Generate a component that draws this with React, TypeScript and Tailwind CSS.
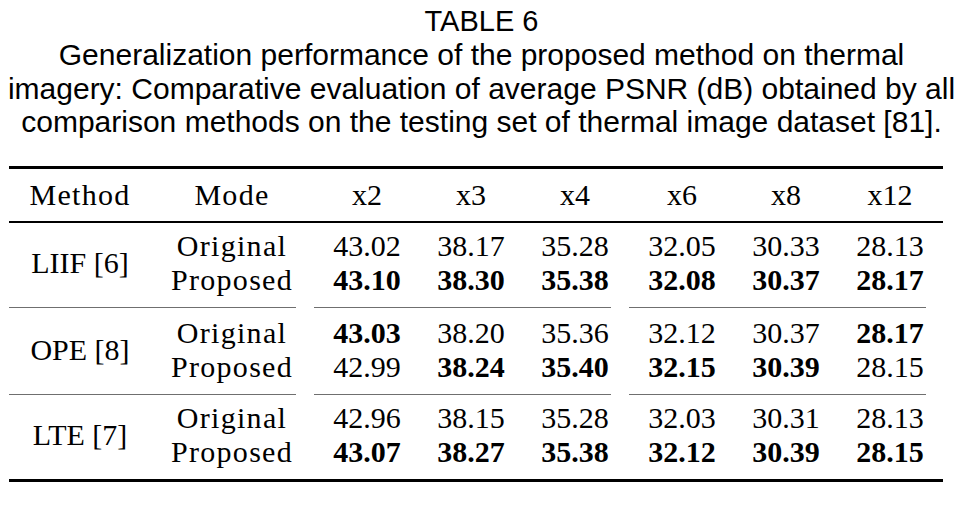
import React from "react";

type Row = { v: string; b: boolean }[];
type Group = { name: string; orig: Row; prop: Row };

const r = (s: string): Row =>
  s.split(" ").map((t) => ({ v: t.replace("*", ""), b: t.startsWith("*") }));

const groups: Group[] = [
  {
    name: "LIIF [6]",
    orig: r("43.02 38.17 35.28 32.05 30.33 28.13"),
    prop: r("*43.10 *38.30 *35.38 *32.08 *30.37 *28.17"),
  },
  {
    name: "OPE [8]",
    orig: r("*43.03 38.20 35.36 32.12 30.37 *28.17"),
    prop: r("42.99 *38.24 *35.40 *32.15 *30.39 28.15"),
  },
  {
    name: "LTE [7]",
    orig: r("42.96 38.15 35.28 32.03 30.31 28.13"),
    prop: r("*43.07 *38.27 *35.38 *32.12 *30.39 *28.15"),
  },
];

const grid =
  "grid grid-cols-[142px_162px_108px_100px_108px_106px_102px_106px] items-center text-center";

function NumCells({ row }: { row: Row }) {
  return (
    <>
      {row.map((c, i) => (
        <div key={i} className={c.b ? "font-bold" : ""}>
          {c.v}
        </div>
      ))}
    </>
  );
}

function GroupBlock({ g, pt }: { g: Group; pt: string }) {
  return (
    <div className={`flex ${pt} pb-[10px]`}>
      <div className="flex w-[142px] items-center justify-center">{g.name}</div>
      <div className="grid flex-1 grid-cols-[162px_108px_100px_108px_106px_102px_106px] text-center">
        <div className="tracking-[1.3px]">Original</div>
        <NumCells row={g.orig} />
        <div className="tracking-[1.3px]">Proposed</div>
        <NumCells row={g.prop} />
      </div>
    </div>
  );
}

function MidRule() {
  return (
    <div className="flex h-px">
      <div className="w-[287px] bg-[#6f6f6f]" />
      <div className="ml-[18px] w-[297px] bg-[#6f6f6f]" />
      <div className="ml-[18px] w-[297px] bg-[#6f6f6f]" />
    </div>
  );
}

export default function App() {
  return (
    <div className="h-[507px] w-[963px] overflow-hidden bg-white text-black">
      <div className="pt-[5px] text-center font-['Liberation_Sans',Arial,sans-serif] text-[30px] leading-[33.3px]">
        <div className="text-[29px]">TABLE 6</div>
        <div>Generalization performance of the proposed method on thermal</div>
        <div>imagery: Comparative evaluation of average PSNR (dB) obtained by all</div>
        <div>comparison methods on the testing set of thermal image dataset [81].</div>
      </div>
      <div className="ml-[9px] mt-[28px] w-[934px] font-['Liberation_Serif','Times_New_Roman',serif] text-[30px] leading-[34px]">
        <div className="h-[3px] bg-black" />
        <div className={`${grid} py-[9px]`}>
          <div className="tracking-[1.3px]">Method</div>
          <div className="tracking-[1.3px]">Mode</div>
          <div>x2</div>
          <div>x3</div>
          <div>x4</div>
          <div>x6</div>
          <div>x8</div>
          <div>x12</div>
        </div>
        <div className="h-[2px] bg-black" />
        <GroupBlock g={groups[0]} pt="pt-[6px]" />
        <MidRule />
        <GroupBlock g={groups[1]} pt="pt-[8px]" />
        <MidRule />
        <GroupBlock g={groups[2]} pt="pt-[6px]" />
        <div className="h-[3px] bg-black" />
      </div>
    </div>
  );
}
